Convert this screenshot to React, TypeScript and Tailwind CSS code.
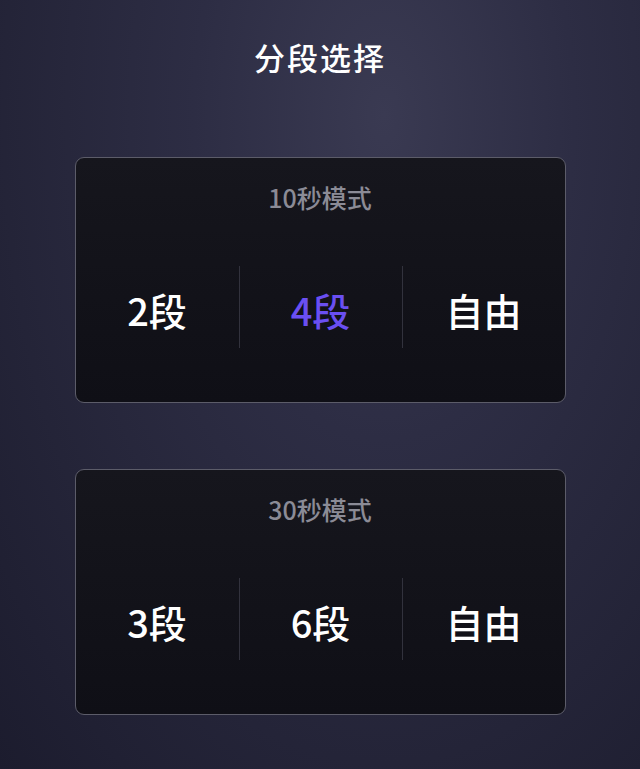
const FONT = "font-['Noto_Sans_CJK_SC','Noto_Sans',sans-serif]";

interface Mode {
	title: string;
	options: string[];
	active?: number;
}

const modes: Mode[] = [
	{ title: "10秒模式", options: ["2段", "4段", "自由"], active: 1 },
	{ title: "30秒模式", options: ["3段", "6段", "自由"] },
];

function ModeCard({ mode }: { mode: Mode }) {
	return (
		<div className="w-[491px] h-[246px] rounded-[9px] border border-[#5c5c69] bg-[linear-gradient(180deg,#16161d_0%,#0f0f16_100%)] pt-[24px]">
			<p className="text-center text-[25px] leading-[30px] font-medium text-[#8b8b96]">
				{mode.title}
			</p>
			<div className="mt-[54px] flex h-[82px] items-center">
				{mode.options.map((opt, i) => (
					<div key={opt + i} className="flex flex-1 h-full items-center">
						{i > 0 && <div className="h-full w-px bg-[#32323d]" />}
						<p
							className={
								"flex-1 pt-[6px] text-center text-[38px] font-medium leading-none " +
								(mode.active === i ? "text-[#6a4ff2]" : "text-white")
							}
						>
							{opt}
						</p>
					</div>
				))}
			</div>
		</div>
	);
}

export default function App() {
	return (
		<div
			className={
				FONT +
				" min-h-[769px] w-full flex flex-col items-center bg-[radial-gradient(ellipse_at_60%_15%,#3a3a52_0%,#2d2d44_35%,#242438_70%,#1c1c2e_100%)]"
			}
		>
			<h1 className="mt-[36px] text-[31px] leading-[42px] font-medium tracking-[2px] text-white">
				分段选择
			</h1>
			<div className="mt-[79px] flex flex-col gap-[66px]">
				{modes.map((m) => (
					<ModeCard key={m.title} mode={m} />
				))}
			</div>
		</div>
	);
}
